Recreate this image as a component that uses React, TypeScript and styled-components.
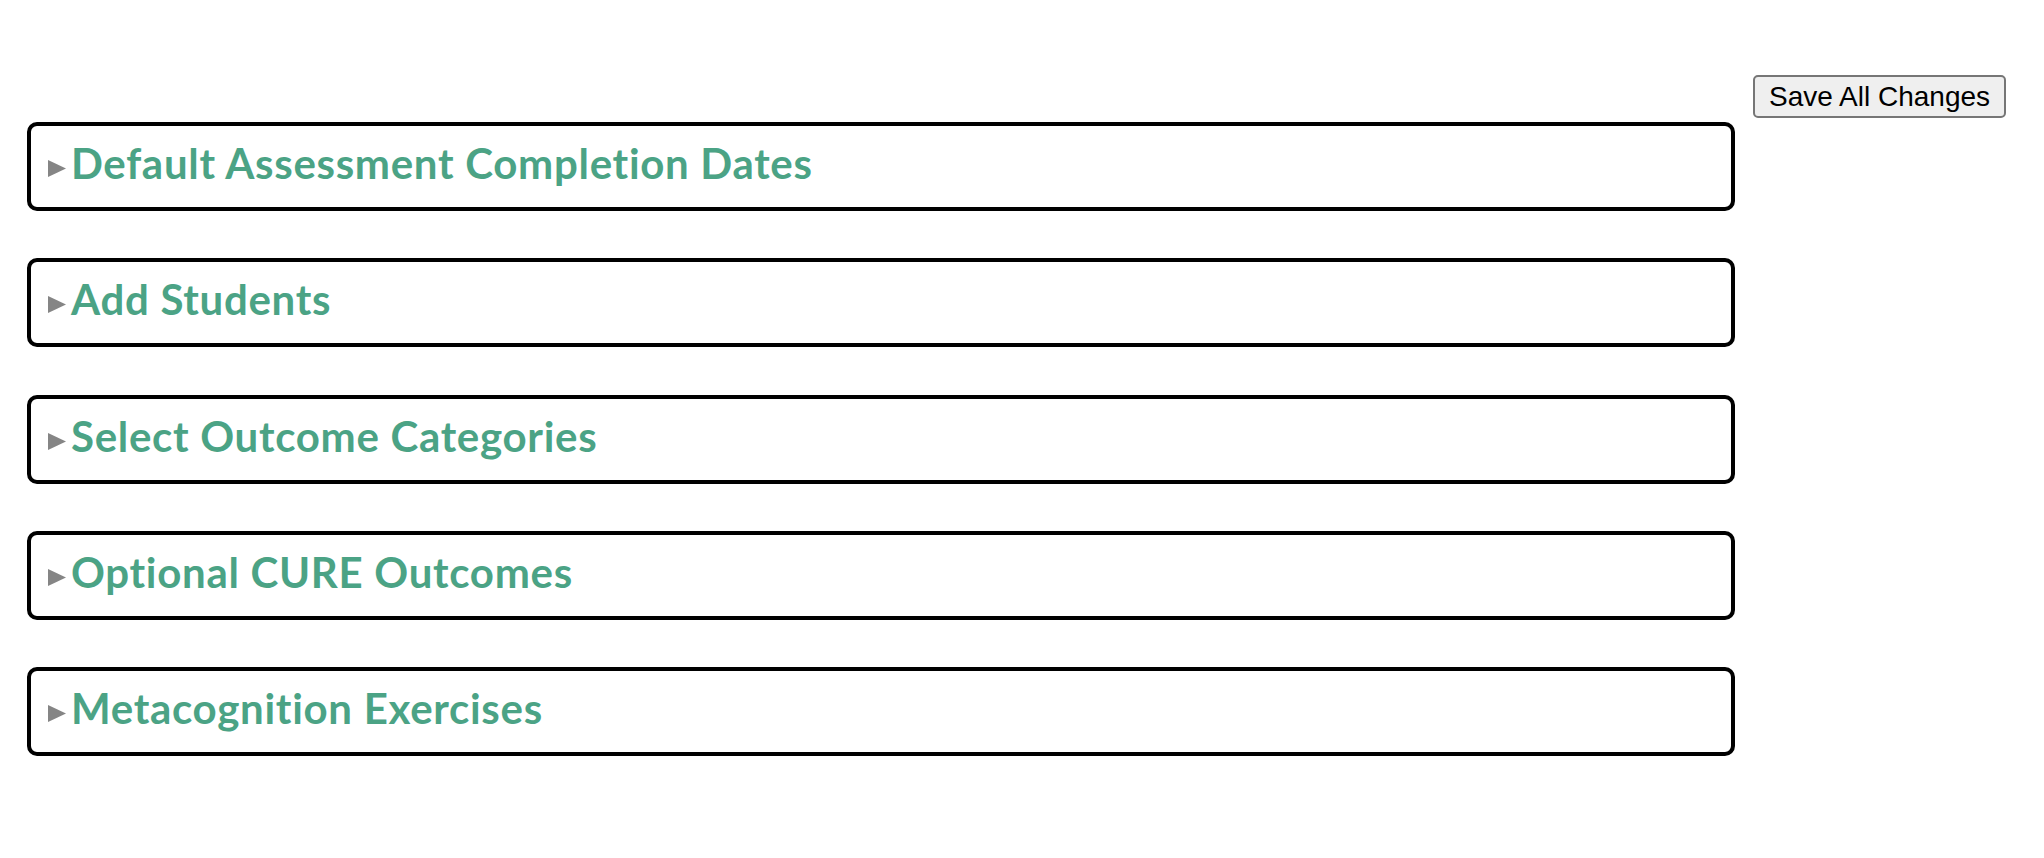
import styled, { createGlobalStyle } from 'styled-components';

const sections = [
  'Default Assessment Completion Dates',
  'Add Students',
  'Select Outcome Categories',
  'Optional CURE Outcomes',
  'Metacognition Exercises',
];

const GlobalStyle = createGlobalStyle`
  body {
    margin: 0;
    background: #ffffff;
    font-family: 'Liberation Sans', Arial, sans-serif;
  }
`;

const Arrow = () => (
  <ArrowIcon viewBox='0 0 17 16' aria-hidden='true'>
    <polygon points='0,0 17,8 0,16' fill='#858585' />
  </ArrowIcon>
);

const App = () => {
  return (
    <>
      <GlobalStyle />
      <Page>
        <Sections>
          {sections.map(title => (
            <Section key={title}>
              <Summary>
                <Arrow />
                <Title>{title}</Title>
              </Summary>
            </Section>
          ))}
        </Sections>
        <SaveButton type='button'>Save All Changes</SaveButton>
      </Page>
    </>
  );
};

const Page = styled.div`
  display: flex;
  align-items: flex-start;
  padding: 75px 0 0 27px;
`;

const Sections = styled.div`
  width: 1708px;
  margin-top: 47px;

  display: flex;
  flex-direction: column;
  gap: 47.3px;
`;

const Section = styled.details`
  box-sizing: border-box;
  height: 89px;
  border: 4px solid #000000;
  border-radius: 10px;
  background: #ffffff;
`;

const Summary = styled.summary`
  height: 100%;
  list-style: none;
  padding: 0 0 6px 17px;
  box-sizing: border-box;

  display: flex;
  align-items: center;
  gap: 5px;

  cursor: pointer;

  &::-webkit-details-marker {
    display: none;
  }
`;

const ArrowIcon = styled.svg`
  width: 18px;
  height: 17px;
  flex-shrink: 0;
  margin-top: 10px;
  filter: blur(0.3px);
`;

const Title = styled.h2`
  margin: 0;
  font-family: 'Lato', 'Noto Sans', sans-serif;
  font-weight: 700;
  font-size: 42px;
  line-height: 49px;
  letter-spacing: 0.7px;
  color: #4ba385;
`;

const SaveButton = styled.button`
  box-sizing: border-box;
  height: 43px;
  margin-left: 18px;
  padding: 0 14px;

  font-family: 'Liberation Sans', Arial, sans-serif;
  font-size: 28px;
  color: #000000;

  background: #efefef;
  border: 2px solid #767676;
  border-radius: 5px;

  cursor: pointer;
`;

export default App;
